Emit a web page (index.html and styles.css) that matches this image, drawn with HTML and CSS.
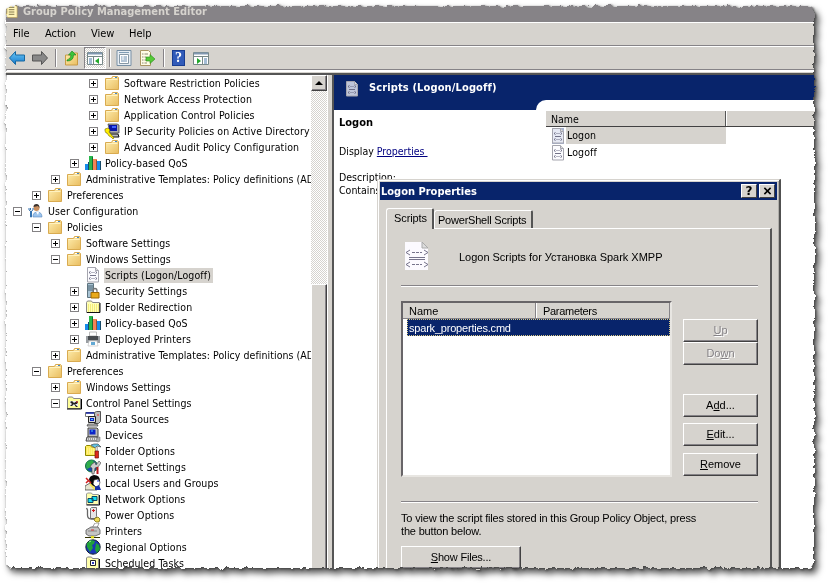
FILE: index.html
```html
<!DOCTYPE html>
<html lang="en">
<head>
<meta charset="utf-8">
<title>Group Policy Management Editor</title>
<link rel="stylesheet" href="styles.css">
</head>
<body>
<svg class="defs" width="0" height="0" aria-hidden="true">
<defs>
<filter id="rough" x="-5%" y="-5%" width="110%" height="110%"><feTurbulence type="fractalNoise" baseFrequency="0.16" numOctaves="3" seed="4"/><feDisplacementMap in="SourceGraphic" scale="6" xChannelSelector="R" yChannelSelector="G"/><feGaussianBlur stdDeviation="0.7"/></filter>
<mask id="torn" maskUnits="userSpaceOnUse" x="0" y="0" width="829" height="584"><rect x="6" y="6" width="808" height="562" rx="5" fill="#fff" filter="url(#rough)"/></mask>
<linearGradient id="fg" x1="0" y1="0" x2="1" y2="1"><stop offset="0" stop-color="#ffefb0"/><stop offset="1" stop-color="#e9bd60"/></linearGradient>
<linearGradient id="bg" x1="0" y1="0" x2="0" y2="1"><stop offset="0" stop-color="#6cc8f5"/><stop offset="1" stop-color="#1478cc"/></linearGradient>
<symbol id="folder" viewBox="0 0 16 16"><path d="M1.500 14.500v-11h6l1-2h5l1 1v12z" fill="url(#fg)" stroke="#d9ab50"/><path d="M9 2.500h4" stroke="#fff"/><path d="M11 2.500h2" stroke="#3f86c8"/><path d="M2.500 4.500h11" stroke="#fff2c0"/></symbol>
<symbol id="script" viewBox="0 0 16 16"><path d="M2.500 .5h8l3 3v11.500h-11z" fill="#fbfbff" fill-opacity=".75" stroke="#a5a5ae"/><path d="M10.500 .5v3h3" fill="#ddd" stroke="#a5a5ae"/><path d="M5.500 4.500l-1.500 1 1.500 1M10.500 4.500l1.500 1-1.500 1M6.500 5.500h1M8.500 5.500h1M5 8.500h6M5.500 10.500l-1.500 1 1.500 1M10.500 10.500l1.500 1-1.500 1M6.500 11.500h1M8.500 11.500h1" fill="none" stroke="#62627a" stroke-width=".9"/></symbol>
<symbol id="qos" viewBox="0 0 16 16"><path d="M0 9h3v6H0z" fill="#168cea"/><path d="M4 1h4v14H4z" fill="#27b84b"/><path d="M8 4h4v11H8z" fill="#f28358"/><path d="M12 6h3v9h-3z" fill="#168cea"/><path d="M3.500 7v8M15.500 6v9" stroke="#174a68"/><path d="M7.500 2v13" stroke="#176a30"/><path d="M11.500 5v10" stroke="#a0512f"/></symbol>
<symbol id="ipsec" viewBox="0 0 16 16"><path d="M4 1h9l2 1v8H6z" fill="#aaa" stroke="#333" stroke-width=".7"/><path d="M5 2h8v6H5z" fill="#0b16a8"/><path d="M8 3h4v2H8z" fill="#3f63ff"/><path d="M6 11h8l1 3H8z" fill="#bbb" stroke="#111"/><path d="M1 6l3-1 2 2-1 2 5 6-1 1-2-2-2-1-2-3H2L1 8z" fill="#ffef00" stroke="#756900" stroke-width=".6"/></symbol>
<symbol id="user" viewBox="0 0 16 16"><path d="M5 14v-2q1-3 4-3 5 0 5 5z" fill="#9cc4ee" stroke="#5b8cc0" stroke-width=".6"/><circle cx="8.500" cy="5" r="3" fill="#c98e5e"/><path d="M5.500 4q0-3 3-3t3 4L10 3z" fill="#3c322e"/><path d="M1 5v2l1.500 1v6h1V8L5 7V5M2.500 5v2" stroke="#3572b0" fill="none"/><path d="M8 9l2 3 1-3z" fill="#fff"/></symbol>
<symbol id="lock" viewBox="0 0 16 16"><path d="M2.500.5h6v14h-6z" fill="#a9c4d5" stroke="#5e7480"/><path d="M3 3h5M3 5h5M3 7h5" stroke="#48616f"/><path d="M6 9.500h8v5.500H6z" fill="#e9aa1b" stroke="#9d6804"/><path d="M8 9V8q0-2.500 2-2.500T12 8v1" fill="none" stroke="#777" stroke-width="1.300"/></symbol>
<symbol id="redir" viewBox="0 0 16 16"><path d="M1.500 13.500v-10l1-1.500h4l1 1.500h7v10z" fill="#ffffb8" stroke="#888"/><path d="M2 13.500h13V4" fill="none" stroke="#111"/><path d="M3 6h11M3 8h11M3 10h11M3 12h11" stroke="#e6dc3e" stroke-dasharray="1 1"/></symbol>
<symbol id="dprinter" viewBox="0 0 16 16"><path d="M4.500 1h7v4h-7z" fill="#fff" stroke="#bbb"/><path d="M1 5h14v7H1z" fill="#9a9ea2"/><path d="M3 5h10v4H3z" fill="#484c50"/><path d="M4 10h8l1 5H3z" fill="#fff" stroke="#bbb" stroke-width=".6"/><path d="M6 11h4v3H6z" fill="#63a9d4"/></symbol>
<symbol id="cpl" viewBox="0 0 16 16"><path d="M1.500 13.500v-10l1-1.500h4l1 1.500h7v10z" fill="#ffff98" stroke="#888"/><path d="M1 14h14.500V4" fill="none" stroke="#000"/><path d="M4 6h8v5H4z" fill="#eee"/><path d="M4 7l2-1 2 2 3-2 1 1-1 2h-2l3 3h-2L8 9l-2 2H4l2-2z" fill="#222"/><path d="M10 7h2" stroke="#d22"/></symbol>
<symbol id="data" viewBox="0 0 16 16"><path d="M.5 1.500h9v4h-9z" fill="#fff" stroke="#777"/><path d="M1 2h8" stroke="#0b1ca0" stroke-width="1.500"/><path d="M9.500 1.500l2-1h4v10l-2 2h-4z" fill="#bbb" stroke="#555"/><path d="M3.500 5.500h7v6h-7z" fill="#d8d8d8" stroke="#222"/><path d="M5 7h4v3H5z" fill="#0c24c8"/><path d="M6 8h2v1H6z" fill="#5cf"/><path d="M3 13h9l1 2H2z" fill="#c5c5c5" stroke="#333" stroke-width=".7"/><path d="M12 4h2" stroke="#d33"/></symbol>
<symbol id="devices" viewBox="0 0 16 16"><path d="M3 1h9l1 1v8H3z" fill="#bbb" stroke="#444"/><path d="M4.500 2.500h6v5h-6z" fill="#0c24c8"/><path d="M6 4h2" stroke="#51c6ff"/><path d="M2 10h10l1 4H1z" fill="#ddd" stroke="#444"/><path d="M3 12h8" stroke="#555" stroke-dasharray="1 1"/><path d="M11 14l1-3 3-1v4l-2 1z" fill="#aaa" stroke="#666" stroke-width=".5"/></symbol>
<symbol id="fopt" viewBox="0 0 16 16"><path d="M.5 12.500v-9l1-1h4l1 1.500h5v8.500z" fill="#ffec5c" stroke="#8f8800"/><path d="M2 6h7M2 8h7M2 10h7" stroke="#fff9b4" stroke-dasharray="1 1"/><path d="M6 2l3-1h4l3 3-4-1-2 2z" fill="#62c5e8" stroke="#333" stroke-width=".6"/><path d="M10.500 4h2v4h-2z" fill="#ddd" stroke="#888" stroke-width=".5"/><path d="M10 8h3.500v7H10z" fill="#dc291c" stroke="#761207" stroke-width=".7"/></symbol>
<symbol id="inet" viewBox="0 0 16 16"><circle cx="6.500" cy="7" r="6" fill="#1849ae" stroke="#173"/><path d="M2 3l5-2 3 3-4 4-4 2-1-3z" fill="#2fae49"/><path d="M7 5l3-2 1 3 3-4 2 2-3 4-3 1-1 6H7V9L5 8z" fill="#ccc" stroke="#444" stroke-width=".6"/><path d="M11.500 8h2v7h-2z" fill="#b9181e"/></symbol>
<symbol id="users" viewBox="0 0 16 16"><path d="M0 11l5-3 5 1 2 6H0z" fill="#e4e4d0" stroke="#333" stroke-width=".7"/><path d="M5 9l5 5" stroke="#f4e553" stroke-width="2"/><path d="M4 5Q4 1 9 0q6 0 6 6l-3 7-5-3z" fill="#090909"/><path d="M9 5l4-1 2 3-1 4-3 1-3-3z" fill="#fff" stroke="#222" stroke-width=".6"/><path d="M12 6h2" stroke="#1730d9"/><path d="M10 12l4-2 2 5h-6z" fill="#1730a9"/><path d="M1 3l5 5M3 6l-2 2" stroke="#ce2020" stroke-width="1.500"/></symbol>
<symbol id="network" viewBox="0 0 16 16"><path d="M1.500 13.500V3l1-1h4l1 1.500h6v10z" fill="#ffffac" stroke="#999"/><path d="M1.500 14h13V4" fill="none" stroke="#111"/><path d="M3 7.500h5v4H3zM7 5.500h5v4H7z" fill="#16dff0" stroke="#0b4565"/></symbol>
<symbol id="power" viewBox="0 0 16 16"><path d="M5.500 1.500l1-1h5v9l-1 2h-5z" fill="#e6e6e6" stroke="#777"/><path d="M7 3.500h3M8.500 2v3" stroke="#d31818"/><path d="M1.500 1l1 2v5q0 4 4 4h3" stroke="#666" fill="none" stroke-width="1.300"/><path d="M10 11l3-1 2 2-1 3h-3l-2-2z" fill="#eedc54" stroke="#655a00" stroke-width=".7"/></symbol>
<symbol id="printer" viewBox="0 0 16 16"><path d="M7 5l3-5h4l-2 5z" fill="#fff" stroke="#777" stroke-width=".7"/><path d="M1 7l5-3h7l2 3v4l-5 2H4l-3-2z" fill="#c4c4c4" stroke="#555" stroke-width=".8"/><path d="M3 8h9" stroke="#888"/><path d="M6 7h3" stroke="#d33"/><path d="M0 14.500h15" stroke="#303000"/><path d="M6 13h3v2.500H6z" fill="#e4df22"/></symbol>
<symbol id="globe" viewBox="0 0 16 16"><circle cx="8" cy="8" r="7.200" fill="#1936b8" stroke="#123"/><path d="M2 4l4-3 4 1-1 3-2 1 1 3-3 4-3-5zM11 4l3 2 1 4-3 4-2-3z" fill="#20a23b"/><path d="M4 3l2-1" stroke="#9be7a3"/></symbol>
<symbol id="sched" viewBox="0 0 16 16"><path d="M1.500 14V3l1-1h4l1 1.500h6V14z" fill="#ffffac" stroke="#888"/><path d="M14.500 4v11" stroke="#111"/><path d="M5.500 5.500h5v5h-5z" fill="#fff" stroke="#222"/><path d="M7 7h2v2H7z" fill="#2b3bbf"/></symbol>
</defs>
</svg>
<div class="shadow">
<div class="window">
<header class="titlebar"><svg class="app-icon" viewBox="0 0 14 14"><path d="M1 0h9l2 1v12H2l-2-2V9h1z" fill="#fff4b8" stroke="#b69c52" stroke-width=".7"/><path d="M3 2h6M3 4.500h6M3 7h6M3 9.500h6" stroke="#7c7045"/></svg><span>Group Policy Management Editor</span></header>
<nav class="menubar"><span class="m1">File</span><span class="m2">Action</span><span class="m3">View</span><span class="m4">Help</span></nav>
<div class="toolbar">
<svg class="tb" viewBox="0 0 16 16"><path d="M.5 8L6.500 1.500V5h9v6h-9v3.500z" fill="url(#bg)" stroke="#1668a2"/></svg>
<svg class="tb t2" viewBox="0 0 16 16"><path d="M15.500 8L9.500 1.500V5h-9v6h9v3.500z" fill="#888" stroke="#555"/></svg>
<i class="sep s1"></i>
<svg class="tb t3" viewBox="0 0 16 16"><path d="M1.500 15V5h5l1-2h6v12z" fill="url(#fg)" stroke="#c89b46"/><path d="M3 10q4-1 4-5H4.500L8 1l4 4H9.500q0 6-6.500 6z" fill="#3cc43c" stroke="#188018" stroke-width=".6"/></svg>
<span class="pressed"><svg viewBox="0 0 16 16"><path d="M.5 2.500h15v12H.5z" fill="#fff" stroke="#788"/><path d="M1 3.500h14" stroke="#8198b1" stroke-width="2"/><path d="M0 6.500h16M6.500 7v7" stroke="#788"/><path d="M2 9h3M2 11h3M2 13h3" stroke="#4b7baa"/><path d="M12 8v6l-4-3z" fill="#22a82c"/></svg></span>
<i class="sep s2"></i>
<svg class="tb t4" viewBox="0 0 16 16"><path d="M1 .5h14v15H1z" fill="#e7edf3" stroke="#7890a5"/><path d="M3.500 4.500h9v9h-9z" fill="#fff" stroke="#8798a6"/><path d="M3 2.500h10" stroke="#819db5"/><path d="M5 7h1.500M7.500 7H11M5 9h1.500M7.500 9H11M5 11h6" stroke="#6b8bad"/></svg>
<svg class="tb t5" viewBox="0 0 16 16"><path d="M1.500.5h8l2 2v13h-10z" fill="#fffce6" stroke="#aa9665"/><path d="M3 4h6M3 7h4M3 10h4M3 13h5" stroke="#8e8a74" stroke-dasharray="1.500 1 5"/><path d="M7 7h4V4.500l5 4.500-5 4.500V11H7z" fill="#56ca38" stroke="#288b17" stroke-width=".6"/></svg>
<i class="sep s3"></i>
<span class="help">?</span>
<svg class="tb t7" viewBox="0 0 16 16"><path d="M.5 2.500h15v12H.5z" fill="#fff" stroke="#788"/><path d="M1 3.500h14" stroke="#8198b1" stroke-width="2"/><path d="M0 6.500h16M9.500 7v7" stroke="#788"/><path d="M11 9h3M11 11h3M11 13h3" stroke="#4b7baa"/><path d="M4 8v6l4-3z" fill="#22a82c"/></svg>
</div>
<main class="body">
<section class="tree">
<div class="row l4"><i class="box plus"></i><svg><use href="#folder"/></svg><span>Software Restriction Policies</span></div>
<div class="row l4"><i class="box plus"></i><svg><use href="#folder"/></svg><span>Network Access Protection</span></div>
<div class="row l4"><i class="box plus"></i><svg><use href="#folder"/></svg><span>Application Control Policies</span></div>
<div class="row l4"><i class="box plus"></i><svg><use href="#ipsec"/></svg><span>IP Security Policies on Active Directory</span></div>
<div class="row l4"><i class="box plus"></i><svg><use href="#folder"/></svg><span>Advanced Audit Policy Configuration</span></div>
<div class="row l3"><i class="box plus"></i><svg><use href="#qos"/></svg><span>Policy-based QoS</span></div>
<div class="row l2"><i class="box plus"></i><svg><use href="#folder"/></svg><span>Administrative Templates: Policy definitions (AD</span></div>
<div class="row l1"><i class="box plus"></i><svg><use href="#folder"/></svg><span>Preferences</span></div>
<div class="row l0"><i class="box"></i><svg><use href="#user"/></svg><span>User Configuration</span></div>
<div class="row l1"><i class="box"></i><svg><use href="#folder"/></svg><span>Policies</span></div>
<div class="row l2"><i class="box plus"></i><svg><use href="#folder"/></svg><span>Software Settings</span></div>
<div class="row l2"><i class="box"></i><svg><use href="#folder"/></svg><span>Windows Settings</span></div>
<div class="row l3"><i class="nobox"></i><svg><use href="#script"/></svg><span class="sel">Scripts (Logon/Logoff)</span></div>
<div class="row l3"><i class="box plus"></i><svg><use href="#lock"/></svg><span>Security Settings</span></div>
<div class="row l3"><i class="box plus"></i><svg><use href="#redir"/></svg><span>Folder Redirection</span></div>
<div class="row l3"><i class="box plus"></i><svg><use href="#qos"/></svg><span>Policy-based QoS</span></div>
<div class="row l3"><i class="box plus"></i><svg><use href="#dprinter"/></svg><span>Deployed Printers</span></div>
<div class="row l2"><i class="box plus"></i><svg><use href="#folder"/></svg><span>Administrative Templates: Policy definitions (AD</span></div>
<div class="row l1"><i class="box"></i><svg><use href="#folder"/></svg><span>Preferences</span></div>
<div class="row l2"><i class="box plus"></i><svg><use href="#folder"/></svg><span>Windows Settings</span></div>
<div class="row l2"><i class="box"></i><svg><use href="#cpl"/></svg><span>Control Panel Settings</span></div>
<div class="row l3"><i class="nobox"></i><svg><use href="#data"/></svg><span>Data Sources</span></div>
<div class="row l3"><i class="nobox"></i><svg><use href="#devices"/></svg><span>Devices</span></div>
<div class="row l3"><i class="nobox"></i><svg><use href="#fopt"/></svg><span>Folder Options</span></div>
<div class="row l3"><i class="nobox"></i><svg><use href="#inet"/></svg><span>Internet Settings</span></div>
<div class="row l3"><i class="nobox"></i><svg><use href="#users"/></svg><span>Local Users and Groups</span></div>
<div class="row l3"><i class="nobox"></i><svg><use href="#network"/></svg><span>Network Options</span></div>
<div class="row l3"><i class="nobox"></i><svg><use href="#power"/></svg><span>Power Options</span></div>
<div class="row l3"><i class="nobox"></i><svg><use href="#printer"/></svg><span>Printers</span></div>
<div class="row l3"><i class="nobox"></i><svg><use href="#globe"/></svg><span>Regional Options</span></div>
<div class="row l3"><i class="nobox"></i><svg><use href="#sched"/></svg><span>Scheduled Tasks</span></div>
</section>
<div class="scroll"><div class="up"><i></i></div><div class="track"></div><div class="thumb"></div></div>
<div class="splitter"></div>
<section class="detail">
<div class="banner"><svg><use href="#script"/></svg><span>Scripts (Logon/Logoff)</span></div>
<div class="cols">
<div class="info"><h2>Logon</h2><p class="disp">Display <a>Properties&nbsp;</a></p><p class="desc">Description:</p><p class="cut">Contains</p></div>
<div class="list">
<div class="lhead"><span>Name</span><span></span></div>
<div class="lrow on"><svg><use href="#script"/></svg><span>Logon</span></div>
<div class="lrow"><svg><use href="#script"/></svg><span>Logoff</span></div>
</div>
</div>
</section>
</main>
<div class="dialog">
<div class="dtitle"><span>Logon Properties</span><b class="cap">?</b><b class="cap"><svg viewBox="0 0 9 9"><path d="M1 1l7 7M8 1L1 8" stroke="#000" stroke-width="1.700"/></svg></b></div>
<div class="tabs"><span class="tab active">Scripts</span><span class="tab second">PowerShell Scripts</span></div>
<div class="panel">
<div class="intro"><svg viewBox="0 0 26 30"><path d="M1 1h17l6 6v22H1z" fill="#fcfaff"/><path d="M18 1v6h6z" fill="#ddd" stroke="#aaa"/><path d="M6 9l-4 2.500L6 14M20 9l4 2.500-4 2.500M8 11.500h3M12 11.500h3M16 11.500h2M5 16.500h16M5 18.500h16M6 21l-4 2.500L6 26M20 21l4 2.500-4 2.500M8 23.500h3M12 23.500h3M16 23.500h2" fill="none" stroke="#77748c"/></svg><span>Logon Scripts for Установка Spark XMPP</span></div>
<hr>
<div class="work">
<div class="files"><div class="fhead"><span>Name</span><span>Parameters</span></div><div class="frow">spark_properties.cmd</div></div>
<div class="btns"><span class="btn off"><u>U</u>p</span><span class="btn off b2">Do<u>w</u>n</span><span class="btn b3">A<u>d</u>d...</span><span class="btn b4"><u>E</u>dit...</span><span class="btn b5"><u>R</u>emove</span></div>
</div>
<hr class="hr2">
<p class="note">To view the script files stored in this Group Policy Object, press<br>the button below.</p>
<span class="btn show"><u>S</u>how Files...</span>
</div>
</div>
</div>
</div>
</body>
</html>
```
FILE: styles.css
```css
*{box-sizing:border-box}
body{margin:0;width:829px;height:584px;overflow:hidden;background:#fff;color:#000;font:10.5px/16px "DejaVu Sans Condensed","DejaVu Sans",sans-serif;font-stretch:condensed}
.defs{position:absolute}
svg{display:block;flex:none}
.shadow{width:829px;height:584px;filter:drop-shadow(1px 1px 1px #444) drop-shadow(3px 4px 3px rgba(0,0,0,.65))}
.window{position:relative;width:829px;height:584px;padding:4px 12px 12px 6px;background:#fff;mask:url(#torn);overflow:hidden;display:flex;flex-direction:column;white-space:nowrap}
.titlebar{height:17px;flex:none;background:#868387;display:flex;align-items:center;gap:4px;color:#d6d3ce;font-weight:bold;font-size:11px}
.titlebar span{margin-top:-2px}
.app-icon{width:13px;height:14px;margin-top:-2px}
.menubar{height:25px;flex:none;background:#d6d3ce;border-top:1px solid #868387;border-bottom:1px solid #868387;box-shadow:inset 0 1px #fff;display:flex;align-items:center;padding:1px 0 0 7px;font-size:11px}
.m1{width:32px}.m2{width:46px}.m3{width:38px}
.toolbar{height:24px;flex:none;background:#d6d3ce;border-top:1px solid #fff;border-bottom:1px solid #868387;display:flex;align-items:center;padding-left:3px}
.tb{width:16px;height:16px}
.t2{margin-left:7px}.t3{margin-left:7px}.t4{margin-left:6px}.t5{margin-left:7px}.t7{margin-left:8px}
.sep{width:2px;height:18px;border-left:1px solid #868387;border-right:1px solid #fff}
.s1{margin-left:7px}.s2{margin-left:3px}.s3{margin-left:8px}
.pressed{width:22px;height:22px;margin-left:4px;border:1px solid #868387;border-right-color:#fff;border-bottom-color:#fff;background:repeating-conic-gradient(#fff 0 25%,#d6d3ce 0 50%) 0 0/2px 2px;display:flex;align-items:center;justify-content:center}
.pressed svg{width:16px;height:16px}
.sep+.tb.t4{margin-left:5px}
.help{width:13px;height:16px;margin-left:7px;background:#315bb9;border:1px solid #183d92;color:#fff;font:bold 14px/14px "Liberation Serif",serif;text-align:center}
.body{flex:1;display:flex;min-height:0;border-top:2px solid #fff;box-shadow:inset 0 1px #d6d3ce,inset 0 3px #555;padding-top:3px}
.tree{width:305px;overflow:hidden;background:#fff;letter-spacing:.1px}
.row{height:16px;display:flex;align-items:center}
.row svg{width:16px;height:16px;margin:0 4px 0 6px}
.row span{line-height:15px}
.row .sel{background:#d6d3ce;margin-left:-1px;padding:0 2px 0 1px}
.l0{padding-left:7px}.l1{padding-left:26px}.l2{padding-left:45px}.l3{padding-left:64px}.l4{padding-left:83px}
.l2 span{letter-spacing:.05px}
.box,.nobox{width:9px;height:9px;flex:none}
.box{border:1px solid #848284;background:linear-gradient(#000,#000) center/5px 1px no-repeat}
.plus{background:linear-gradient(#000,#000) center/5px 1px no-repeat,linear-gradient(#000,#000) center/1px 5px no-repeat}
.scroll{width:16px;display:flex;flex-direction:column}
.up,.thumb{background:#d6d3ce;border:1px solid;border-color:#fff #424142 #424142 #fff;box-shadow:inset -1px -1px #868387}
.up{height:16px;display:flex;align-items:center;justify-content:center}
.up i{border:4px solid transparent;border-top:0;border-bottom:4px solid #000}
.track{height:193px;background:repeating-conic-gradient(#fff 0 25%,#d6d3ce 0 50%) 0 0/2px 2px}
.thumb{flex:1}
.splitter{width:7px;background:#d6d3ce;border-left:1px solid #fff;border-right:2px solid #555}
.detail{flex:1;background:#fff}
.banner{height:35px;background:#08246b;color:#fff;font-weight:bold;font-size:11px;letter-spacing:.13px;display:flex;padding:6px 0 0 10px;gap:9px}
.banner svg{width:16px;height:16px}
.banner span{margin-top:-1px}
.cols{display:flex}
.info{width:202px;padding:5px 0 0 5px;line-height:13px;letter-spacing:0}
.info h2{font-size:11px;line-height:16px;margin:0}
.info p{margin:0}
.info .disp{margin:14px 0 13px}
.info a{color:#000080;text-decoration:underline}
.info .cut{width:38px;overflow:hidden}
.list{flex:1;margin-top:-10px;background:#fff;border-top-left-radius:10px;padding:11px 0 0 11px}
.lhead{height:16px;display:flex;background:#d6d3ce;border-bottom:1px solid #424142;line-height:17px;margin-left:-1px}
.lhead span:first-child{width:180px;padding-left:5px;border-right:1px solid #555}
.lhead span+span{border-left:1px solid #fff;flex:1}
.lrow{height:17px;display:flex;align-items:center}
.lrow svg{width:16px;height:16px;margin-left:3px}
.lrow span{padding-left:1px;width:160px;line-height:17px;letter-spacing:.1px}
.lrow.on span{background:#d6d3ce}
.lrow.on svg{background:linear-gradient(#a8b3d1,#a8b3d1) 2px 0/12px 16px no-repeat}
.dialog{position:absolute;left:377px;top:179px;width:404px;height:420px;background:#d6d3ce;border:1px solid #d6d3ce;border-right:2px solid #505050;box-shadow:inset 1px 1px #fff,inset -1px 0 #b0aeaa;padding:2px 2px 0 2px;font:11px/13px "Liberation Sans",sans-serif}
.dtitle{height:18px;background:#08246b;color:#fff;font:bold 11px/17px "DejaVu Sans Condensed","DejaVu Sans",sans-serif;font-stretch:condensed;display:flex;align-items:center;padding:0 2px 0 1px}
.dtitle span{flex:1}
.cap{width:16px;height:14px;margin-left:2px;background:#d6d3ce;border:1px solid;border-color:#fff #424142 #424142 #fff;color:#000;font:bold 12px/12px "DejaVu Sans",sans-serif;display:flex;align-items:center;justify-content:center}
.cap svg{width:9px;height:8px}
.tabs{display:flex;align-items:flex-end;margin:7px 0 0 6px;height:21px}
.tab{border:1px solid #fff;border-bottom:0;border-right:2px solid #555;border-radius:3px 2px 0 0;letter-spacing:-.1px}
.active{width:48px;height:21px;padding:3px 0 0 7px;background:#d6d3ce;position:relative;top:1px;z-index:1}
.second{width:99px;height:18px;padding:3px 0 0 3px;letter-spacing:-.22px}
.panel{width:386px;margin-left:6px;height:380px;border:1px solid #fff;border-right:2px solid #555;padding:12px 12px 0 14px}
.intro{height:44px;display:flex;padding-left:3px}
.intro svg{width:26px;height:30px}
.intro span{margin:10px 0 0 29px;letter-spacing:-.02px}
hr{height:2px;border:0;border-top:1px solid #868387;border-bottom:1px solid #fff;margin:0 0 14px}
.work{display:flex;gap:11px}
.files{width:271px;height:176px;background:#fff;border:2px solid;border-color:#686568 #e8e6e2 #e8e6e2 #686568}
.fhead{height:16px;background:#d6d3ce;display:flex;line-height:16px;border-bottom:1px solid #868387}
.fhead span:first-child{width:133px;padding-left:6px;border-right:1px solid #868387}
.fhead span+span{flex:1;padding-left:6px;border-left:1px solid #fff;border-right:1px solid #868387;letter-spacing:-.3px}
.frow{height:17px;background:#08246b;color:#fff;margin-left:4px;padding-left:1px;line-height:16px;border:1px dotted #d8c982;letter-spacing:-.2px}
.btns{width:75px;padding-top:18px;display:flex;flex-direction:column}
.btn{height:23px;border:1px solid;border-color:#fff #424142 #424142 #fff;box-shadow:inset -1px -1px #868387;text-align:center;line-height:21px;letter-spacing:0}
.off{color:#868387;text-shadow:1px 1px #fff}
.b3{margin-top:29px}.b4{margin-top:6px}.b5{margin-top:7px}
.hr2{margin:24px 0 9px}
.note{margin:0;letter-spacing:-.17px}
.show{display:block;width:120px;margin-top:8px;letter-spacing:-.2px}
```
